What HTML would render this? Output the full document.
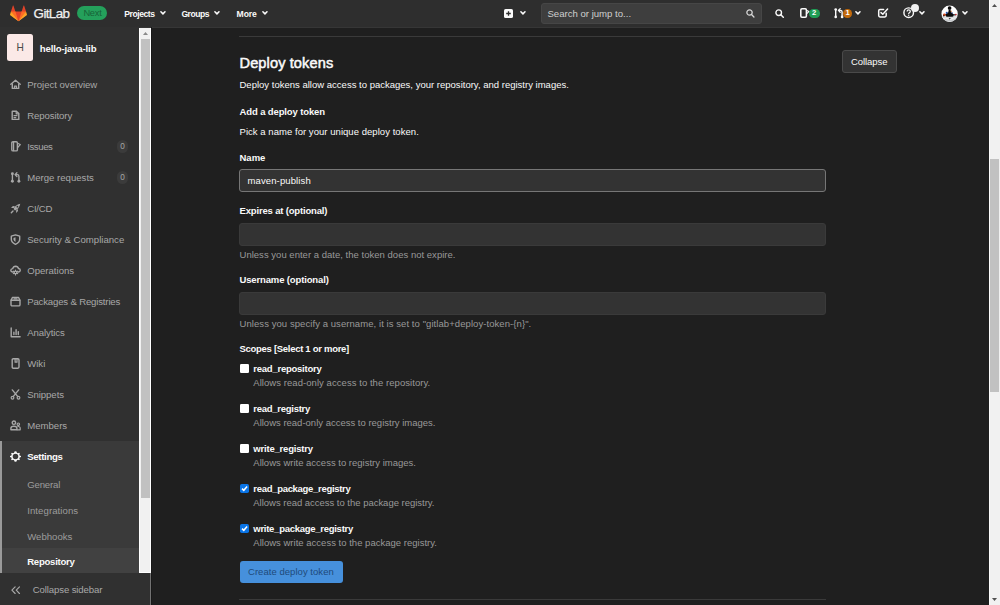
<!DOCTYPE html>
<html>
<head>
<meta charset="utf-8">
<title>Repository · Settings · hello-java-lib · GitLab</title>
<style>
*{box-sizing:border-box;margin:0;padding:0}
html,body{width:1000px;height:605px;overflow:hidden;background:#1f1f1f;font-family:"Liberation Sans",sans-serif;font-size:9.5px;color:#fafafa}
.abs{position:absolute}
/* ---------- top navbar ---------- */
#nav{position:absolute;left:0;top:0;width:989px;height:27.7px;background:#2e2e2e;border-bottom:1px solid #363636}
#nav .t{position:absolute;white-space:nowrap;font-weight:bold;font-size:8.6px;color:#fafafa;line-height:12px}
#nav svg{position:absolute;overflow:visible}
/* ---------- sidebar ---------- */
#side{position:absolute;left:0;top:27px;width:140px;height:546px;background:#303030}
#side .it{position:absolute;left:0;width:140px;height:31px}
#side .it svg{position:absolute;left:10.3px;top:10px;width:11px;height:11px;overflow:visible}
#side .it span.l{position:absolute;left:27.2px;top:10.1px;line-height:12px;font-size:9.6px;color:#a8a8a8;white-space:nowrap}
#side .bd{position:absolute;left:117px;top:9px;width:11px;height:13px;border-radius:7px;background:#3b3b3b;color:#a8a8a8;font-size:8.2px;line-height:13px;text-align:center}
#side .sub{position:absolute;left:27.2px;margin-top:0.6px;line-height:12px;font-size:9.6px;color:#9c9c9c;white-space:nowrap}
/* ---------- main ---------- */
#main .p{position:absolute;left:239.5px;margin-top:0.5px;white-space:nowrap;line-height:12px;font-size:9.5px;color:#fafafa}
#main .b{font-weight:bold}
#main .h{color:#999}
#main .inp{position:absolute;left:239.4px;width:586.2px;height:23.2px;background:#333;border-radius:3px}
.cb{position:absolute;left:240.2px;width:8.4px;height:8.4px;border-radius:1.3px;background:#fff;margin-top:0.3px}
.cb.on{background:#0a74e6;left:239.8px;width:9.1px;height:9.1px;margin-top:0.1px;border-radius:1.8px}
</style>
</head>
<body>
<!-- NAV -->
<div id="nav">
<svg id="logo" style="left:10.3px;top:4.6px" width="17" height="17" viewBox="0 0 36 36"><path fill="#e24329" d="M2 14l9.38 9v-9l-4-12.28c-.205-.632-1.176-.632-1.38 0z"/><path fill="#e24329" d="M34 14l-9.38 9v-9l4-12.28c.205-.632 1.176-.632 1.38 0z"/><path fill="#e24329" d="M18,34.38 3,14 33,14 Z"/><path fill="#fc6d26" d="M18,34.38 11.38,14 2,14 6,25Z"/><path fill="#fc6d26" d="M18,34.38 24.62,14 34,14 30,25Z"/><path fill="#fca326" d="M2 14L.1 20.16c-.18.565 0 1.2.5 1.56l17.42 12.66z"/><path fill="#fca326" d="M34 14l1.9 6.16c.18.565 0 1.2-.5 1.56L18 34.38z"/></svg>
<div class="t" id="gl" style="left:33.6px;top:5.7px;font-size:13.4px;line-height:16px;font-weight:normal;letter-spacing:-0.62px;color:#f0f0f0;-webkit-text-stroke:0.25px #f0f0f0">GitLab</div>
<div class="abs" id="next" style="left:77px;top:6px;width:29.5px;height:14px;border-radius:7px;background:#24a05b"></div>
<div class="t" id="nx" style="left:83.4px;top:7.2px;font-weight:normal;font-size:9.3px;letter-spacing:-0.25px;color:#186339">Next</div>
<div class="t" id="n1" style="left:124.3px;top:7.6px;letter-spacing:-0.47px">Projects</div><svg style="left:159.5px;top:11.4px" width="5.9" height="3.9" viewBox="0 0 5.9 3.9"><path d="M0.9 0.75 L2.95 2.85 L5 0.75" fill="none" stroke="#fafafa" stroke-width="1.55" stroke-linecap="round" stroke-linejoin="round"/></svg>
<div class="t" id="n2" style="left:181.4px;top:7.6px;letter-spacing:-0.47px">Groups</div><svg style="left:213.5px;top:11.4px" width="5.9" height="3.9" viewBox="0 0 5.9 3.9"><path d="M0.9 0.75 L2.95 2.85 L5 0.75" fill="none" stroke="#fafafa" stroke-width="1.55" stroke-linecap="round" stroke-linejoin="round"/></svg>
<div class="t" id="n3" style="left:236.6px;top:7.6px;letter-spacing:-0.1px">More</div><svg style="left:261.5px;top:11.4px" width="5.9" height="3.9" viewBox="0 0 5.9 3.9"><path d="M0.9 0.75 L2.95 2.85 L5 0.75" fill="none" stroke="#fafafa" stroke-width="1.55" stroke-linecap="round" stroke-linejoin="round"/></svg>
<svg id="plus" style="left:504.2px;top:9px" width="9" height="9" viewBox="0 0 9 9"><rect x="0" y="0" width="9" height="9" rx="1.6" fill="#fafafa"/><path d="M4.5 2.2V6.8M2.2 4.5H6.8" stroke="#2e2e2e" stroke-width="1.3"/></svg><svg style="left:519.5px;top:11.4px" width="5.9" height="3.9" viewBox="0 0 5.9 3.9"><path d="M0.9 0.75 L2.95 2.85 L5 0.75" fill="none" stroke="#fafafa" stroke-width="1.55" stroke-linecap="round" stroke-linejoin="round"/></svg>
<div class="abs" id="sb" style="left:541px;top:2.5px;width:221px;height:21.5px;border-radius:3px;background:#3e3e3e;border:1px solid #464646"></div>
<div class="t" id="st" style="left:547.4px;top:7.5px;font-weight:normal;font-size:9.6px;color:#cfcfcf">Search or jump to...</div>
<svg id="si1" style="left:745.7px;top:9.2px" width="8.6" height="8.6" viewBox="0 0 9 9"><circle cx="3.7" cy="3.7" r="2.8" fill="none" stroke="#d8d8d8" stroke-width="1.3"/><path d="M5.8 5.8L8.3 8.3" stroke="#d8d8d8" stroke-width="1.4" stroke-linecap="round"/></svg>
<svg id="si2" style="left:775px;top:8.9px" width="9" height="9" viewBox="0 0 9 9"><circle cx="3.7" cy="3.7" r="2.8" fill="none" stroke="#fafafa" stroke-width="1.4"/><path d="M5.8 5.8L8.3 8.3" stroke="#fafafa" stroke-width="1.5" stroke-linecap="round"/></svg>
<svg id="iss" style="left:799.5px;top:7.7px" width="10" height="10" viewBox="0 0 10 10"><rect x="0.8" y="0.8" width="5.6" height="8.4" rx="1.2" fill="none" stroke="#fafafa" stroke-width="1.55"/><path d="M6.3 2.2 L9 3.4 L6.3 6.2" fill="none" stroke="#fafafa" stroke-width="1.1" stroke-linejoin="round"/></svg>
<div class="abs" id="b2" style="left:808.5px;top:9px;width:11.2px;height:8.5px;border-radius:4.3px;background:#1f9d55;color:#fff;font-weight:bold;font-size:7.6px;line-height:8.6px;text-align:center">2</div>
<svg id="mr" style="left:833.8px;top:7.6px" width="10" height="10.4" viewBox="0 0 10 10.4"><path d="M1.7 1.8V8.6" stroke="#fafafa" stroke-width="1.4"/><circle cx="1.7" cy="1.5" r="1.35" fill="#fafafa"/><circle cx="1.7" cy="8.9" r="1.35" fill="#fafafa"/><path d="M4.8 2.4H6.6Q8.1 2.4 8.1 3.9V8.6" fill="none" stroke="#fafafa" stroke-width="1.4"/><path d="M6.2 0.6L4.4 2.4L6.2 4.2" fill="none" stroke="#fafafa" stroke-width="1.3" stroke-linejoin="round" stroke-linecap="round"/><circle cx="8.1" cy="8.9" r="1.35" fill="#fafafa"/></svg>
<div class="abs" id="b1" style="left:843px;top:9px;width:9.4px;height:8.5px;border-radius:4.3px;background:#c26a0c;color:#fff;font-weight:bold;font-size:7.6px;line-height:8.6px;text-align:center">1</div><svg style="left:854.7px;top:11.4px" width="5.9" height="3.9" viewBox="0 0 5.9 3.9"><path d="M0.9 0.75 L2.95 2.85 L5 0.75" fill="none" stroke="#fafafa" stroke-width="1.55" stroke-linecap="round" stroke-linejoin="round"/></svg>
<svg id="todo" style="left:878px;top:8px" width="10.4" height="9.6" viewBox="0 0 10.4 9.6"><path d="M8.2 5.2V7.6Q8.2 8.9 6.9 8.9H2Q0.7 8.9 0.7 7.6V2.8Q0.7 1.5 2 1.5H5.6" fill="none" stroke="#fafafa" stroke-width="1.5" stroke-linecap="round"/><path d="M3 4.6L4.8 6.3L9.6 1" fill="none" stroke="#fafafa" stroke-width="1.5" stroke-linecap="round" stroke-linejoin="round"/></svg>
<svg id="help" style="left:902.5px;top:7.3px" width="11.4" height="11.4" viewBox="0 0 11.4 11.4"><circle cx="5.7" cy="5.7" r="4.8" fill="none" stroke="#fafafa" stroke-width="1.45"/><path d="M4.1 4.4Q4.1 2.9 5.7 2.9Q7.3 2.9 7.3 4.3Q7.3 5.2 6.3 5.7Q5.7 6 5.7 6.9" fill="none" stroke="#fafafa" stroke-width="1.25"/><circle cx="5.7" cy="8.3" r="0.7" fill="#fafafa"/></svg>
<div class="abs" id="dot" style="left:911px;top:3.8px;width:8.4px;height:8.4px;border-radius:50%;background:#f0f0f0"></div><svg style="left:919px;top:11.4px" width="5.9" height="3.9" viewBox="0 0 5.9 3.9"><path d="M0.9 0.75 L2.95 2.85 L5 0.75" fill="none" stroke="#fafafa" stroke-width="1.55" stroke-linecap="round" stroke-linejoin="round"/></svg>
<svg id="av" style="left:940.6px;top:4.7px" width="17.2" height="17.4" viewBox="0 0 17.2 17.4"><defs><clipPath id="avc"><circle cx="8.6" cy="8.7" r="8.2"/></clipPath></defs><circle cx="8.6" cy="8.7" r="8.5" fill="#1c1c1c"/><circle cx="8.6" cy="8.7" r="8.2" fill="#fdfdfd"/><g clip-path="url(#avc)"><path d="M0 11.6Q8.6 10.2 17.2 11.6V17.4H0Z" fill="#d4d6d8"/><path d="M2 13.6Q5 12.6 7 13.8T12 13.4T16 14" fill="none" stroke="#f4f4f4" stroke-width="0.9"/><path d="M3 15.4Q6 14.6 9 15.6T14 15.2" fill="none" stroke="#b9bdc2" stroke-width="0.7"/><circle cx="5.8" cy="7.9" r="1.1" fill="#2a55b0"/><circle cx="10.9" cy="8.2" r="1" fill="#27408f"/><circle cx="10" cy="6.4" r="0.8" fill="#d8792f"/><circle cx="8.6" cy="3" r="1.85" fill="#0a0a0a"/><path d="M7.8 4.4H9.4L9.9 7.2Q10.6 8.6 12.6 9.3L15.2 9.4V10.3L12.4 10.6Q13 11.4 11.4 11.7H5.8Q4.4 11.4 5 10.4L2.4 10.2V9.3L4.8 9.2Q6.6 8.6 7.3 7.2Z" fill="#0a0a0a"/><circle cx="3.4" cy="9.8" r="1.25" fill="#d9481c"/><circle cx="2.8" cy="10.7" r="0.8" fill="#3a1a12"/><circle cx="14.9" cy="9.6" r="0.8" fill="#c8232c"/><path d="M7.6 13.2H9.8L8.7 14.6Z" fill="#101010"/></g></svg><svg style="left:962.3px;top:11.4px" width="5.9" height="3.9" viewBox="0 0 5.9 3.9"><path d="M0.9 0.75 L2.95 2.85 L5 0.75" fill="none" stroke="#fafafa" stroke-width="1.55" stroke-linecap="round" stroke-linejoin="round"/></svg>
</div>
<!-- SIDEBAR -->
<div id="side">
<div class="abs" id="pav" style="left:7px;top:7.3px;width:26.2px;height:26.7px;border-radius:2.5px;background:#fbe9e7;color:#4a4a4a;font-size:10.2px;line-height:28.6px;text-align:center">H</div>
<div class="abs" id="pname" style="left:39.8px;top:16px;line-height:12px;font-size:9.6px;font-weight:bold;color:#fafafa;white-space:nowrap;letter-spacing:-0.15px">hello-java-lib</div>
<div class="it" style="top:41.5px;color:#a8a8a8"><svg viewBox="0 0 11 11"><path d="M0.8 5.2L5.5 1.2L10.2 5.2" stroke="currentColor" fill="none" stroke-width="1.4" stroke-linejoin="round" stroke-linecap="round"/><path d="M2.3 5V9.4H8.7V5" stroke="currentColor" fill="none" stroke-width="1.4" stroke-linejoin="round" stroke-linecap="round"/><path d="M4.5 9.4V7.2H6.5V9.4" stroke="currentColor" fill="none" stroke-width="1.2" stroke-linejoin="round" stroke-linecap="round"/></svg><span class="l" id="sl0" style="letter-spacing:-0.02px">Project overview</span></div>
<div class="it" style="top:72.5px;color:#a8a8a8"><svg viewBox="0 0 11 11"><path d="M2.2 1.6V9.4H8.8V3.6L6.4 1.2H2.6Q2.2 1.2 2.2 1.6Z" stroke="currentColor" fill="none" stroke-width="1.4" stroke-linejoin="round" stroke-linecap="round"/><path d="M6.2 1.4V3.8H8.6" stroke="currentColor" fill="none" stroke-width="1.2" stroke-linejoin="round" stroke-linecap="round" stroke-width="1"/><path d="M4 5.7H7M4 7.6H5.8" stroke="currentColor" fill="none" stroke-width="1.2" stroke-linejoin="round" stroke-linecap="round"/></svg><span class="l" id="sl1" style="letter-spacing:-0.09px">Repository</span></div>
<div class="it" style="top:103.5px;color:#a8a8a8"><svg viewBox="0 0 11 11"><rect x="1.8" y="0.7" width="5.6" height="9.2" rx="1.2" stroke="currentColor" fill="none" stroke-width="1.4" stroke-linejoin="round" stroke-linecap="round"/><path d="M3.6 1V9.6" stroke="currentColor" fill="none" stroke-width="1.2" stroke-linejoin="round" stroke-linecap="round" stroke-width="1"/><path d="M7.6 2.3L10.3 3.5L7.6 6.7" stroke="currentColor" fill="none" stroke-width="1.2" stroke-linejoin="round" stroke-linecap="round"/></svg><span class="l" id="sl2" style="letter-spacing:-0.4px">Issues</span><span class="bd">0</span></div>
<div class="it" style="top:134.5px;color:#a8a8a8"><svg viewBox="0 0 11 11"><path d="M2.4 2V9" stroke="currentColor" stroke-width="1.35"/><circle cx="2.4" cy="1.7" r="1.45" fill="currentColor"/><circle cx="2.4" cy="9.3" r="1.45" fill="currentColor"/><path d="M5.4 2.6H7.3Q8.9 2.6 8.9 4.2V9" fill="none" stroke="currentColor" stroke-width="1.35"/><path d="M6.9 0.7L5 2.6L6.9 4.5" fill="none" stroke="currentColor" stroke-width="1.3" stroke-linejoin="round" stroke-linecap="round"/><circle cx="8.9" cy="9.3" r="1.45" fill="currentColor"/></svg><span class="l" id="sl3">Merge requests</span><span class="bd">0</span></div>
<div class="it" style="top:165.5px;color:#a8a8a8"><svg viewBox="0 0 11 11"><path d="M3.6 6.1Q4.8 2.2 10.3 0.8Q9 6.4 5 7.5Z" fill="currentColor"/><path d="M3.9 4.9L1 5L2.9 3.1L5 3.2Z M6.2 7.2L6.1 10L8 8.1L7.9 6Z" fill="currentColor"/><path d="M3 8.1L1.3 9.8" stroke="currentColor" stroke-width="1.4" stroke-linecap="round"/><circle cx="7.4" cy="3.7" r="0.9" fill="#303030"/></svg><span class="l" id="sl4" style="letter-spacing:-0.22px">CI/CD</span></div>
<div class="it" style="top:196.5px;color:#a8a8a8"><svg viewBox="0 0 11 11"><path d="M5.5 0.9L9.7 2.2V5.3Q9.7 8.4 5.5 10.3Q1.3 8.4 1.3 5.3V2.2Z" stroke="currentColor" fill="none" stroke-width="1.4" stroke-linejoin="round" stroke-linecap="round"/><path d="M5.5 3.2V7.9Q3.5 6.9 3.5 5.2V3.9Z" fill="currentColor"/></svg><span class="l" id="sl5">Security &amp; Compliance</span></div>
<div class="it" style="top:227.5px;color:#a8a8a8"><svg viewBox="0 0 11 11"><path d="M3 7H2.6Q0.8 6.8 0.8 5.2Q0.9 3.7 2.7 3.6Q3.3 1.2 5.6 1.2Q8 1.3 8.5 3.5Q10.3 3.7 10.3 5.3Q10.2 6.8 8.4 7H8.1" stroke="currentColor" fill="none" stroke-width="1.4" stroke-linejoin="round" stroke-linecap="round"/><circle cx="5.5" cy="7.4" r="1.3" stroke="currentColor" fill="none" stroke-width="1.2" stroke-linejoin="round" stroke-linecap="round"/><path d="M5.5 5V5.6M5.5 9.2V9.9M3.4 6.2L3.9 6.5M7.1 8.3L7.6 8.6M3.4 8.6L3.9 8.3M7.1 6.5L7.6 6.2" stroke="currentColor" fill="none" stroke-width="1.2" stroke-linejoin="round" stroke-linecap="round"/></svg><span class="l" id="sl6">Operations</span></div>
<div class="it" style="top:258.5px;color:#a8a8a8"><svg viewBox="0 0 11 11"><path d="M1 4.2H10V8.7Q10 9.9 8.8 9.9H2.2Q1 9.9 1 8.7Z" stroke="currentColor" fill="none" stroke-width="1.4" stroke-linejoin="round" stroke-linecap="round"/><path d="M1.2 4L2.4 1.5H8.6L9.8 4" stroke="currentColor" fill="none" stroke-width="1.4" stroke-linejoin="round" stroke-linecap="round"/><path d="M4.1 2.9H6.9" stroke="currentColor" fill="none" stroke-width="1.2" stroke-linejoin="round" stroke-linecap="round" stroke-width="1"/></svg><span class="l" id="sl7" style="letter-spacing:-0.17px">Packages &amp; Registries</span></div>
<div class="it" style="top:289.5px;color:#a8a8a8"><svg viewBox="0 0 11 11"><path d="M1.2 0.9V9.8H10.1" stroke="currentColor" fill="none" stroke-width="1.4" stroke-linejoin="round" stroke-linecap="round"/><path d="M3.9 7.6V5.2M6.1 7.6V2.8M8.3 7.6V4.6" stroke="currentColor" fill="none" stroke-width="1.4" stroke-linejoin="round" stroke-linecap="round" stroke-width="1.5"/></svg><span class="l" id="sl8" style="letter-spacing:-0.1px">Analytics</span></div>
<div class="it" style="top:320.5px;color:#a8a8a8"><svg viewBox="0 0 11 11"><path d="M2.2 1.9Q2.2 0.8 3.3 0.8H7.9Q9 0.8 9 1.9V9.1Q9 10.2 7.9 10.2H3.3Q2.2 10.2 2.2 9.1Z" stroke="currentColor" fill="none" stroke-width="1.4" stroke-linejoin="round" stroke-linecap="round"/><path d="M5.1 1V4.2H7V1" stroke="currentColor" fill="none" stroke-width="1.2" stroke-linejoin="round" stroke-linecap="round"/></svg><span class="l" id="sl9">Wiki</span></div>
<div class="it" style="top:351.5px;color:#a8a8a8"><svg viewBox="0 0 11 11"><path d="M2.3 0.9L7.6 7.4M8.7 0.9L3.4 7.4" stroke="currentColor" fill="none" stroke-width="1.4" stroke-linejoin="round" stroke-linecap="round"/><circle cx="2.5" cy="8.7" r="1.35" stroke="currentColor" fill="none" stroke-width="1.2" stroke-linejoin="round" stroke-linecap="round"/><circle cx="8.5" cy="8.7" r="1.35" stroke="currentColor" fill="none" stroke-width="1.2" stroke-linejoin="round" stroke-linecap="round"/></svg><span class="l" id="sl10" style="letter-spacing:-0.07px">Snippets</span></div>
<div class="it" style="top:382.5px;color:#a8a8a8"><svg viewBox="0 0 11 11"><circle cx="3.9" cy="2.7" r="1.7" stroke="currentColor" fill="none" stroke-width="1.4" stroke-linejoin="round" stroke-linecap="round"/><path d="M0.9 9.8V8.3Q0.9 6.2 3.9 6.2Q6.9 6.2 6.9 8.3V9.8Z" stroke="currentColor" fill="none" stroke-width="1.4" stroke-linejoin="round" stroke-linecap="round"/><circle cx="8.3" cy="4.2" r="1.2" stroke="currentColor" fill="none" stroke-width="1.2" stroke-linejoin="round" stroke-linecap="round"/><path d="M7.9 6.5Q10.2 6.3 10.2 8.3V9.8H7.2" stroke="currentColor" fill="none" stroke-width="1.2" stroke-linejoin="round" stroke-linecap="round"/></svg><span class="l" id="sl11">Members</span></div>
<div class="abs" style="left:0;top:414px;width:140px;height:132px;background:#3a3a3a;border-left:2px solid #9a9a9a"></div>
<div class="it" style="top:413.5px;color:#fafafa"><svg viewBox="0 0 11 11"><path d="M5.5 0.3L6.5 0.5L6.9 1.8L7.9 2.3L9.1 1.7L9.9 2.5L9.3 3.7L9.7 4.6L11 5L11 6L9.7 6.4L9.3 7.3L9.9 8.5L9.1 9.3L7.9 8.7L6.9 9.2L6.5 10.5L5.5 10.7L4.5 10.5L4.1 9.2L3.1 8.7L1.9 9.3L1.1 8.5L1.7 7.3L1.3 6.4L0 6L0 5L1.3 4.6L1.7 3.7L1.1 2.5L1.9 1.7L3.1 2.3L4.1 1.8L4.5 0.5Z M5.5 2.7A2.8 2.8 0 1 0 5.5 8.3A2.8 2.8 0 1 0 5.5 2.7Z" fill="currentColor" fill-rule="evenodd"/></svg><span class="l" id="sl12" style="color:#fafafa;font-weight:bold;letter-spacing:-0.31px">Settings</span></div>
<div class="sub" id="ss0" style="letter-spacing:-0.150px;top:451px">General</div>
<div class="sub" id="ss1" style="letter-spacing:0.070px;top:477.5px">Integrations</div>
<div class="sub" id="ss2" style="top:503.0px">Webhooks</div>
<div class="abs" style="left:2px;top:521px;width:138px;height:25px;background:#414141"></div>
<div class="sub" id="ss3" style="top:528.5px;color:#fafafa;font-weight:bold;letter-spacing:-0.27px">Repository</div>
</div>
<div class="abs" id="sscroll" style="left:139.4px;top:27.5px;width:12px;height:545.3px;border-bottom:1px solid #fff;background:#f1f1f1;border-left:1px solid #fff;border-right:1px solid #fff"></div>
<div class="abs" style="left:141.3px;top:38.8px;width:8.6px;height:459px;background:#c1c1c1"></div>
<svg class="abs" style="left:143px;top:32px" width="5" height="3" viewBox="0 0 5 3"><path d="M0 3L2.5 0L5 3Z" fill="#8a8a8a"/></svg>
<div class="abs" style="left:151.25px;top:27px;width:1px;height:578px;background:#181818"></div>

<div id="sidefoot" class="abs" style="left:0;top:572.8px;width:151.3px;height:32.2px;background:#303030;border-right:1.4px solid #727272"></div>
<svg class="abs" id="cdl" style="left:11.3px;top:585.5px" width="9.4" height="8.4" viewBox="0 0 10 8.4"><path d="M4.4 0.7L1 4.2L4.4 7.7M9 0.7L5.6 4.2L9 7.7" fill="none" stroke="#a8a8a8" stroke-width="1.25" stroke-linecap="round" stroke-linejoin="round"/></svg>
<div class="abs" id="cst" style="letter-spacing:-0.125px;left:32.8px;top:584px;line-height:12px;font-size:9.6px;color:#a8a8a8;white-space:nowrap">Collapse sidebar</div>
<!-- MAIN -->
<div id="main">
<div class="abs" style="left:239px;top:36px;width:662px;height:1px;background:#3a3a3a"></div>
<div class="p" id="h4" style="top:52px;font-size:14.6px;line-height:20px;font-weight:normal;-webkit-text-stroke:0.5px #fafafa;letter-spacing:0.1px">Deploy tokens</div>
<div class="p" id="d1" style="letter-spacing:0.008px;top:78px">Deploy tokens allow access to packages, your repository, and registry images.</div>
<div class="p b" id="d2" style="letter-spacing:-0.120px;top:105px">Add a deploy token</div>
<div class="p" id="d3" style="letter-spacing:0.046px;top:125px">Pick a name for your unique deploy token.</div>
<div class="p b" id="l1" style="letter-spacing:0.000px;top:151px">Name</div>
<div class="inp" style="top:169.1px;height:22.9px;border:1px solid #767676"></div>
<div class="p" id="v1" style="letter-spacing:0.120px;left:247.5px;top:174.2px">maven-publish</div>
<div class="p b" id="l2" style="letter-spacing:-0.167px;top:204px">Expires at (optional)</div>
<div class="inp" style="top:223px;border:1px solid #3a3a3a"></div>
<div class="p h" id="h1" style="letter-spacing:0.020px;top:248px">Unless you enter a date, the token does not expire.</div>
<div class="p b" id="l3" style="letter-spacing:-0.140px;top:273px">Username (optional)</div>
<div class="inp" style="top:292px;border:1px solid #3a3a3a"></div>
<div class="p h" id="h2" style="letter-spacing:0.070px;top:317px">Unless you specify a username, it is set to "gitlab+deploy-token-{n}".</div>
<div class="p b" id="l4" style="letter-spacing:-0.290px;top:342px">Scopes [Select 1 or more]</div>
<div class="cb" style="top:364px"></div>
<div class="p b" id="s0" style="letter-spacing:-0.240px;left:253.3px;top:362px">read_repository</div>
<div class="p h" id="sd0" style="letter-spacing:0.056px;left:253.3px;top:376px">Allows read-only access to the repository.</div>
<div class="cb" style="top:404px"></div>
<div class="p b" id="s1" style="letter-spacing:-0.270px;left:253.3px;top:402px">read_registry</div>
<div class="p h" id="sd1" style="letter-spacing:0.000px;left:253.3px;top:416px">Allows read-only access to registry images.</div>
<div class="cb" style="top:444px"></div>
<div class="p b" id="s2" style="letter-spacing:-0.200px;left:253.3px;top:442px">write_registry</div>
<div class="p h" id="sd2" style="letter-spacing:0.000px;left:253.3px;top:456px">Allows write access to registry images.</div>
<div class="cb on" style="top:484px"><svg viewBox="0 0 9 9" width="9" height="9" style="position:absolute;left:0;top:0"><path d="M2 4.6 L3.8 6.3 L7.1 2.6" fill="none" stroke="#fff" stroke-width="1.5"/></svg></div>
<div class="p b" id="s3" style="letter-spacing:-0.300px;left:253.3px;top:482px">read_package_registry</div>
<div class="p h" id="sd3" style="letter-spacing:-0.020px;left:253.3px;top:496px">Allows read access to the package registry.</div>
<div class="cb on" style="top:524px"><svg viewBox="0 0 9 9" width="9" height="9" style="position:absolute;left:0;top:0"><path d="M2 4.6 L3.8 6.3 L7.1 2.6" fill="none" stroke="#fff" stroke-width="1.5"/></svg></div>
<div class="p b" id="s4" style="letter-spacing:-0.270px;left:253.3px;top:522px">write_package_registry</div>
<div class="p h" id="sd4" style="letter-spacing:0.015px;left:253.3px;top:536px">Allows write access to the package registry.</div>
<div class="abs" id="btn" style="left:239.5px;top:560.6px;width:103.3px;height:22.6px;background:#4690dc;border-radius:3px"></div>
<div class="p" id="bt" style="letter-spacing:0.040px;left:248px;top:565.6px;color:#204a7a">Create deploy token</div>
<div class="abs" style="left:239px;top:599px;width:587px;height:1px;background:#3a3a3a"></div>
<div class="abs" id="colbtn" style="left:842px;top:50.1px;width:55px;height:22.7px;background:#333;border:1px solid #4a4a4a;border-radius:3px"></div>
<div class="p" id="colt" style="letter-spacing:-0.070px;left:851px;top:55px">Collapse</div>
</div>
<div class="abs" id="pscroll" style="left:988.8px;top:0;width:11.2px;height:605px;background:#f1f1f1;border-left:1px solid #fcfcfc"></div>
<div class="abs" style="left:990.3px;top:159px;width:8.7px;height:232.8px;background:#c1c1c1"></div>
<svg class="abs" style="left:992.25px;top:4px" width="5" height="3" viewBox="0 0 5 3"><path d="M0 3L2.5 0L5 3Z" fill="#505050"/></svg>
<svg class="abs" style="left:992.25px;top:597.6px" width="5" height="3" viewBox="0 0 5 3"><path d="M0 0L2.5 3L5 0Z" fill="#505050"/></svg>
</body>
</html>
